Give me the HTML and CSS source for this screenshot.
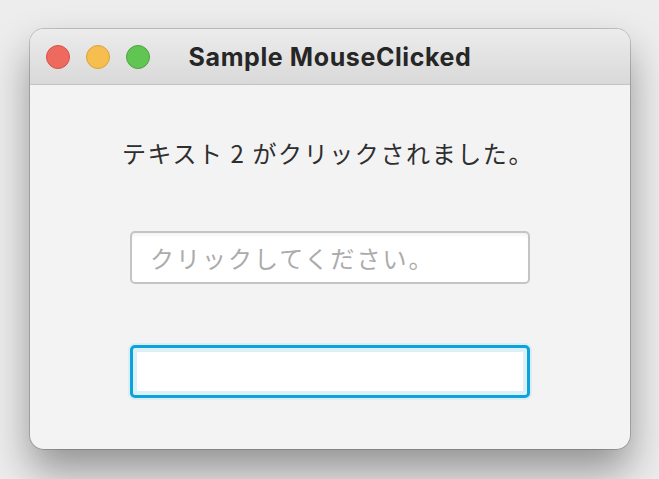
FILE: index.html
```html
<!DOCTYPE html>
<html lang="ja">
<head>
<meta charset="utf-8">
<title>Sample MouseClicked</title>
<link rel="stylesheet" href="styles.css">
</head>
<body>
<div class="window">
  <div class="titlebar">
    <div class="lights">
      <span class="light red"></span>
      <span class="light yellow"></span>
      <span class="light green"></span>
    </div>
    <div class="title">Sample MouseClicked</div>
  </div>
  <div class="content">
    <div class="label">テキスト 2 がクリックされました。</div>
    <input class="field" type="text" placeholder="クリックしてください。">
    <input class="field focused" type="text">
  </div>
</div>
</body>
</html>
```
FILE: styles.css
```css
html, body {
  margin: 0;
  padding: 0;
}
body {
  width: 659px;
  height: 479px;
  background: #ededed;
  overflow: hidden;
  display: flex;
  justify-content: center;
  align-items: flex-start;
  padding-top: 29px;
  box-sizing: border-box;
}
.window {
  width: 600px;
  height: 420px;
  border-radius: 14px;
  background: #f3f3f3;
  box-shadow: 0 0 0 1px rgba(0,0,0,0.18), 0 22px 40px rgba(0,0,0,0.38);
  overflow: hidden;
  display: flex;
  flex-direction: column;
  margin-left: 1px;
}
.titlebar {
  height: 55px;
  flex: none;
  background: linear-gradient(#ececec, #d9d9d9);
  border-bottom: 1px solid #c4c4c4;
  position: relative;
  display: flex;
  align-items: center;
}
.lights {
  display: flex;
  gap: 16px;
  padding-left: 16px;
}
.light {
  width: 24px;
  height: 24px;
  border-radius: 50%;
  box-sizing: border-box;
}
.red { background: #ee6a5f; border: 1px solid #d55347; }
.yellow { background: #f6be4f; border: 1px solid #dca13a; }
.green { background: #61c554; border: 1px solid #4ca53e; }
.title {
  position: absolute;
  left: 0;
  right: 0;
  top: 0;
  bottom: 0;
  display: flex;
  align-items: center;
  justify-content: center;
  font-family: Inter, "Liberation Sans", sans-serif;
  font-weight: 700;
  font-size: 25px;
  letter-spacing: 0.6px;
  color: #262626;
  pointer-events: none;
}
.content {
  flex: 1;
  display: flex;
  flex-direction: column;
  align-items: center;
  padding-top: 50px;
}
.label {
  font-family: "Noto Sans CJK JP", sans-serif;
  font-size: 24px;
  letter-spacing: 1.6px;
  line-height: 36px;
  color: #2e2e2e;
  margin-left: -4px;
}
.field {
  width: 400px;
  height: 53px;
  box-sizing: border-box;
  border: 2px solid #c4c4c4;
  border-radius: 5px;
  background: #fff;
  box-shadow: inset 0 4px 4px -2px rgba(0,0,0,0.06);
  font-family: "Noto Sans CJK JP", sans-serif;
  font-size: 24px;
  letter-spacing: 2px;
  padding: 0 18px;
  outline: none;
  margin-top: 60px;
}
.field::placeholder {
  color: #ababab;
}
.field.focused {
  margin-top: 61px;
  border: 3px solid #0ba3d9;
  box-shadow: inset 0 0 0 4px #dcf0f8, 0 0 0 2px #dcedf5;
}
```
